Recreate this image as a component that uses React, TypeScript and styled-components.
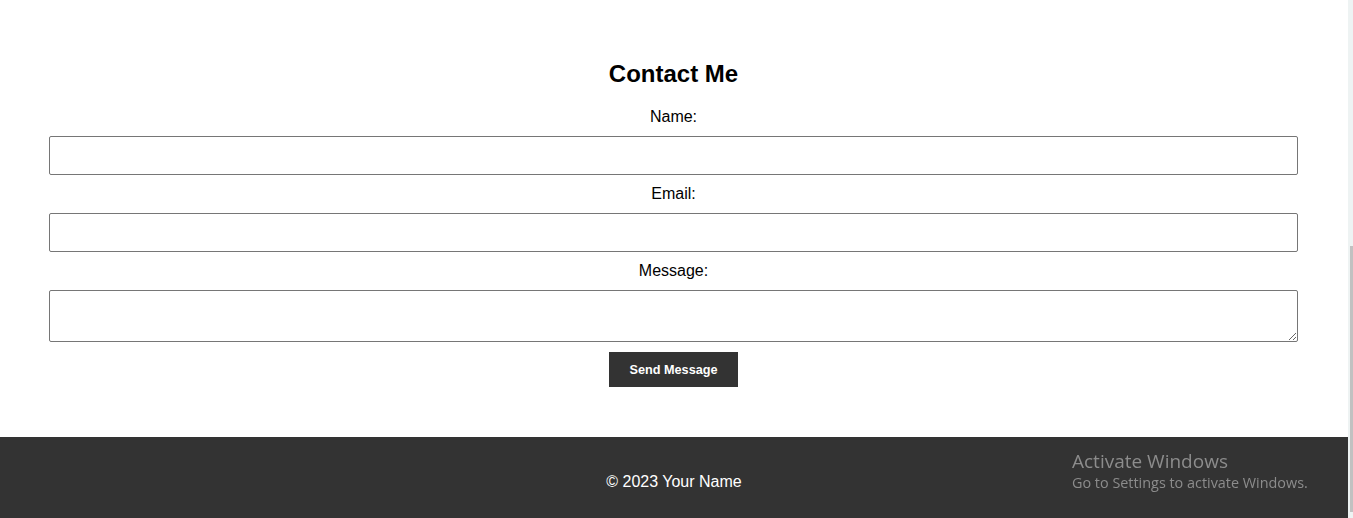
import { FC } from 'react'
import styled, { createGlobalStyle } from 'styled-components'

const GlobalStyle = createGlobalStyle`
  html, body {
    margin: 0;
    height: 100%;
    overflow: hidden;
    background: #fff;
    font-family: "Liberation Sans", Arial, sans-serif;
  }
  #root {
    height: 100%;
  }
`

const Shell = styled.div`
  display: flex;
  height: 100%;
`

const Page = styled.div`
  flex: 1;
  min-width: 0;
  display: flex;
  flex-direction: column;
`

const ContactSection = styled.section`
  padding: 60px 50px 50px 49px;
  text-align: center;
`

const Title = styled.h2`
  margin: 0 0 20px;
  font-size: 24px;
  line-height: 28px;
  font-weight: bold;
  color: #000;
`

const Form = styled.form`
  display: flex;
  flex-direction: column;
  align-items: center;
`

const FieldGroup = styled.div`
  width: 100%;
`

const Label = styled.label`
  display: block;
  font-size: 16px;
  line-height: 18px;
  margin-bottom: 10px;
  color: #000;
`

const Field = styled.input`
  display: block;
  box-sizing: border-box;
  width: 100%;
  height: 39px;
  margin: 0 0 10px;
  border: 1px solid #767676;
  border-radius: 2px;
  font: inherit;
`

const MessageBox = styled.textarea`
  display: block;
  box-sizing: border-box;
  width: 100%;
  height: 52px;
  margin: 0 0 10px;
  border: 1px solid #767676;
  border-radius: 2px;
  font: inherit;
`

const SendButton = styled.button`
  background: #333;
  color: #fff;
  border: none;
  padding: 11px 20px 9px;
  font-family: "Liberation Sans", Arial, sans-serif;
  font-size: 12.7px;
  line-height: 15px;
  font-weight: bold;
  cursor: pointer;
`

const Footer = styled.footer`
  background: #333;
  color: #fff;
  text-align: center;
  padding: 36px 0 20px;
  font-size: 16px;
  line-height: 18px;
  flex: 1;
`

const ScrollTrack = styled.div`
  width: 5px;
  background: #eef3f3;
  display: flex;
  flex-direction: column;
  padding-top: 246px;
  box-sizing: border-box;
`

const ScrollThumb = styled.div`
  height: 266px;
  margin-left: 2px;
  background: #c1c1c1;
`

const Watermark = styled.div`
  position: fixed;
  left: 1072px;
  top: 449px;
  color: #8c8c8c;
  font-family: "Open Sans", "Noto Sans", sans-serif;
  pointer-events: none;
`

const WatermarkTitle = styled.div`
  font-size: 19px;
  line-height: 24px;
`

const WatermarkText = styled.div`
  font-size: 14.4px;
  line-height: 20px;
`

const fields = [
  { id: 'name', label: 'Name:', type: 'text' },
  { id: 'email', label: 'Email:', type: 'email' },
]

const App: FC = () => {
  return (
    <Shell>
      <GlobalStyle />
      <Page>
        <ContactSection>
          <Title>Contact Me</Title>
          <Form onSubmit={e => e.preventDefault()}>
            {fields.map(f => (
              <FieldGroup key={f.id}>
                <Label htmlFor={f.id}>{f.label}</Label>
                <Field id={f.id} type={f.type} />
              </FieldGroup>
            ))}
            <FieldGroup>
              <Label htmlFor='message'>Message:</Label>
              <MessageBox id='message' />
            </FieldGroup>
            <SendButton type='submit'>Send Message</SendButton>
          </Form>
        </ContactSection>
        <Footer>© 2023 Your Name</Footer>
      </Page>
      <ScrollTrack>
        <ScrollThumb />
      </ScrollTrack>
      <Watermark>
        <WatermarkTitle>Activate Windows</WatermarkTitle>
        <WatermarkText>Go to Settings to activate Windows.</WatermarkText>
      </Watermark>
    </Shell>
  )
}

export default App
